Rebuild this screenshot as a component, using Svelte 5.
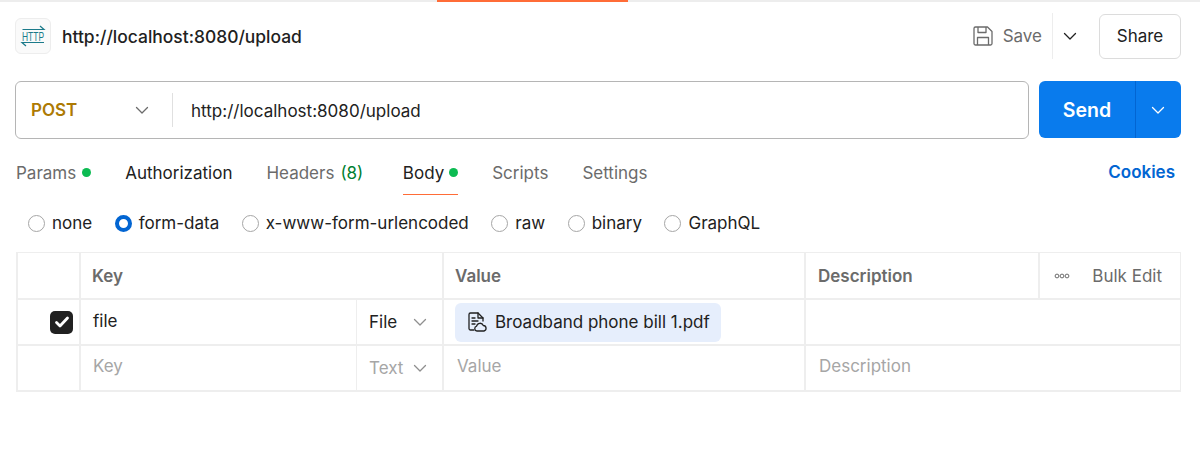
<script>
	const tabs = [
		{ label: 'Params', dot: true },
		{ label: 'Authorization', dark: true },
		{ label: 'Headers', count: '(8)' },
		{ label: 'Body', dot: true, active: true },
		{ label: 'Scripts' },
		{ label: 'Settings' }
	];
	const bodyTypes = ['none', 'form-data', 'x-www-form-urlencoded', 'raw', 'binary', 'GraphQL'];
	let bodyType = $state('form-data');
</script>

{#snippet chevron(size, color)}
	<svg width={size} height={size} viewBox="0 0 16 16" fill="none" stroke={color} stroke-width="1.3" stroke-linecap="round" stroke-linejoin="round"><path d="M2.5 5.5 8 11l5.5-5.5" /></svg>
{/snippet}

<div class="app">
	<div class="topline"><span class="accent"></span></div>

	<header>
		<span class="http-icon">
			<svg width="26" height="26" viewBox="0 0 26 26" fill="none" stroke="#1b7a8a" stroke-width="1.2">
				<path d="M2.500 6.500H24L20 3" />
				<path d="M24 19.500H2L6 23" />
				<text transform="translate(2 17.800) scale(.675 1)" font-size="12.500" fill="#1b7a8a" stroke="none" font-family="Liberation Sans, sans-serif">HTTP</text>
			</svg>
		</span>
		<span class="title">http://localhost:8080/upload</span>
		<div class="actions">
			<svg class="save-icon" width="22" height="22" viewBox="0 0 22 22" fill="none" stroke="#6b6b6b" stroke-width="1.300" stroke-linejoin="round">
				<path d="M2 3.500A1.500 1.500 0 0 1 3.500 2h12L20 6.500v12a1.500 1.500 0 0 1-1.500 1.500h-15A1.500 1.500 0 0 1 2 18.500z" />
				<path d="M6 2v5.500h8V2M5.500 20v-7.500h11V20" />
			</svg>
			<span class="save">Save</span>
			<span class="save-more">{@render chevron(16, '#212121')}</span>
			<button class="share">Share</button>
		</div>
	</header>

	<div class="request">
		<div class="url-box">
			<div class="method">
				<span>POST</span>
				{@render chevron(16, '#6b6b6b')}
			</div>
			<div class="url">http://localhost:8080/upload</div>
		</div>
		<div class="send">
			<span class="send-label">Send</span>
			<span class="send-more">{@render chevron(16, '#fff')}</span>
		</div>
	</div>

	<nav class="tabs">
		{#each tabs as t}
			<span class="tab" class:dark={t.dark} class:active={t.active} class:has-count={t.count}>
				{t.label}
				{#if t.count}<span class="count">{t.count}</span>{/if}
				{#if t.dot}<span class="dot"></span>{/if}
			</span>
		{/each}
		<span class="cookies">Cookies</span>
	</nav>

	<div class="body-types">
		{#each bodyTypes as b}
			<label class="radio">
				<input type="radio" name="body" value={b} bind:group={bodyType} />
				<span>{b}</span>
			</label>
		{/each}
	</div>

	<div class="table">
		<div class="row head">
			<div class="cell check"></div>
			<div class="cell key">Key</div>
			<div class="cell value">Value</div>
			<div class="cell desc">Description</div>
			<div class="cell bulk">
				<svg width="16" height="6" viewBox="0 0 16 6" fill="none" stroke="#6b6b6b" stroke-width="1"><circle cx="3" cy="3" r="1.900" /><circle cx="8" cy="3" r="1.900" /><circle cx="13" cy="3" r="1.900" /></svg>
				<span>Bulk Edit</span>
			</div>
		</div>
		<div class="row">
			<div class="cell check">
				<span class="checkbox">
					<svg width="16" height="16" viewBox="0 0 16 16" fill="none" stroke="#fff" stroke-width="2.800" stroke-linecap="round" stroke-linejoin="round"><path d="M2.500 8.500 6 12l7.500-8" /></svg>
				</span>
			</div>
			<div class="cell key split">
				<span class="key-text file-name">file</span>
				<span class="type">File {@render chevron(16, '#8f8f8f')}</span>
			</div>
			<div class="cell value">
				<span class="file-chip">
					<svg width="22" height="22" viewBox="0 0 22 22" fill="none" stroke="#212121" stroke-width="1.300" stroke-linejoin="round" stroke-linecap="round">
						<path d="M8 19H4.500A1.500 1.500 0 0 1 3 17.500v-14A1.500 1.500 0 0 1 4.500 2h7.500l5 5v3" />
						<path d="M12 2v5h5" />
						<path d="M6 7h3M6 10h6M6 13h3" />
						<path d="M11 20a2.500 2.500 0 0 1-.4-4.900 3.500 3.500 0 0 1 6.700-.6 2.800 2.800 0 0 1 .7 5.500z" />
					</svg>
					<span>Broadband phone bill 1.pdf</span>
				</span>
			</div>
			<div class="cell rest"></div>
		</div>
		<div class="row">
			<div class="cell check"></div>
			<div class="cell key split">
				<span class="key-text muted up">Key</span>
				<span class="type muted">Text {@render chevron(16, '#8f8f8f')}</span>
			</div>
			<div class="cell value"><span class="muted value-text up">Value</span></div>
			<div class="cell rest"><span class="muted desc-text up">Description</span></div>
		</div>
	</div>
</div>

<style>
	:global(body) {
		margin: 0;
		background: #fff;
		color: #212121;
		font-family: Inter, 'Noto Sans', sans-serif;
		font-size: 17px;
	}
	.app {
		height: 469px;
		overflow: hidden;
	}
	.topline {
		height: 2px;
		background: #ededed;
		padding-left: 437px;
	}
	.accent {
		display: block;
		width: 191px;
		height: 2px;
		background: #ff6c37;
	}

	header {
		display: flex;
		align-items: center;
		height: 36px;
		margin-top: 16px;
		padding: 0 19px 0 15px;
	}
	.http-icon {
		display: flex;
		align-items: center;
		justify-content: center;
		width: 36px;
		height: 36px;
		box-sizing: border-box;
		border: 1px solid #ededed;
		border-radius: 6px;
		background: #fafafa;
	}
	.title {
		margin-left: 11px;
		font-size: 17.450px;
		font-weight: 500;
	}
	.actions {
		display: flex;
		align-items: center;
		margin-left: auto;
	}
	.save { margin-left: 9px; color: #6b6b6b; }
	.save-more {
		display: flex;
		align-items: center;
		height: 46px;
		margin-left: 10px;
		padding: 0 10px 0 9px;
		border-left: 1px solid #ededed;
	}
	.share {
		width: 82px;
		height: 45px;
		margin-left: 11px;
		background: #fff;
		border: 1px solid #dcdcdc;
		border-radius: 6px;
		color: #212121;
		font: inherit;
	}

	.request {
		display: flex;
		gap: 10px;
		margin-top: 27px;
		padding: 0 19px 0 15px;
	}
	.url-box {
		flex: 1;
		display: flex;
		align-items: center;
		height: 58px;
		box-sizing: border-box;
		border: 1px solid #b5b5b5;
		border-radius: 6px;
	}
	.method {
		display: flex;
		align-items: center;
		justify-content: space-between;
		width: 157px;
		height: 34px;
		box-sizing: border-box;
		padding: 0 22px 0 15px;
		border-right: 1px solid #e0e0e0;
		color: #ad7a03;
		font-weight: 600;
	}
	.url { margin-left: 18px; font-size: 17.050px; }
	.send {
		display: flex;
		width: 142px;
		height: 57px;
		background: #097bed;
		border-radius: 6px;
		color: #fff;
	}
	.send-label {
		flex: 1;
		display: flex;
		align-items: center;
		justify-content: center;
		font-size: 19.500px;
		font-weight: 600;
		border-right: 1px solid #0265d2;
	}
	.send-more {
		display: flex;
		align-items: center;
		justify-content: center;
		box-sizing: border-box;
		width: 45px;
		padding-right: 2px;
	}

	.tabs {
		display: flex;
		align-items: flex-start;
		gap: 34px;
		margin-top: 22px;
		padding: 0 25px 0 16px;
		color: #6b6b6b;
	}
	.tab {
		display: flex;
		align-items: center;
		gap: 6px;
		height: 34px;
		box-sizing: border-box;
		padding-bottom: 10px;
		border-bottom: 1px solid transparent;
	}
	.tab.dark, .tab.active { color: #212121; }
	.tab.active {
		gap: 5px;
		border-bottom-color: #ff6c37;
	}
	.tab.has-count { margin-right: 5.500px; }
	.count { color: #007f31; }
	.dot {
		width: 9px;
		height: 9px;
		border-radius: 50%;
		background: #0cbb52;
	}
	.cookies {
		margin-top: 1px;
		margin-left: auto;
		color: #0265d2;
		font-weight: 600;
	}

	.body-types {
		display: flex;
		align-items: center;
		gap: 22.500px;
		height: 24px;
		margin-top: 16px;
		padding-left: 28px;
	}
	.radio {
		display: flex;
		align-items: center;
		gap: 7px;
	}
	.radio input {
		appearance: none;
		width: 17px;
		height: 17px;
		margin: 0;
		box-sizing: border-box;
		border: 1px solid #a6a6a6;
		border-radius: 50%;
	}
	.radio input:checked { border: 4px solid #0265d2; }

	.table {
		margin: 17px 19px 0 16px;
		border: solid #eee;
		border-width: 1px 1px 0 2px;
	}
	.row {
		display: grid;
		grid-template-columns: 63px 363px 362px 1fr;
		border-bottom: 2px solid #eee;
		height: 44px;
	}
	.row.head {
		grid-template-columns: 63px 363px 362px 234px 1fr;
		height: 45px;
		color: #6b6b6b;
		font-weight: 600;
	}
	.cell {
		display: flex;
		align-items: center;
		min-width: 0;
		border-right: 2px solid #eee;
		box-sizing: border-box;
		padding-left: 11px;
	}
	.cell:last-child { border-right: 0; }
	.desc { padding-left: 12px; }
	.check {
		justify-content: flex-end;
		padding: 0 6px 0 0;
	}
	.checkbox {
		display: flex;
		align-items: center;
		justify-content: center;
		width: 23px;
		height: 23px;
		background: #212121;
		border-radius: 5px;
	}
	.split { padding: 0; }
	.key-text { flex: 1; padding-left: 12px; }
	.file-name { margin-top: -2px; }
	.up { margin-top: -5px; }
	.type {
		display: flex;
		align-items: center;
		justify-content: space-between;
		width: 86px;
		height: 100%;
		box-sizing: border-box;
		padding: 0 14px 0 12px;
		border-left: 1px solid #eee;
	}
	.muted { color: #a6a6a6; }
	.file-chip {
		display: flex;
		align-items: center;
		gap: 7px;
		height: 39px;
		box-sizing: border-box;
		padding: 0 11px;
		background: #e6eefc;
		border-radius: 6px;
		color: #212121;
	}
	.value-text, .desc-text { padding-left: 2px; }
	.bulk {
		justify-content: space-between;
		padding: 0 18px 0 14px;
		color: #6b6b6b;
		font-weight: 400;
	}
</style>
